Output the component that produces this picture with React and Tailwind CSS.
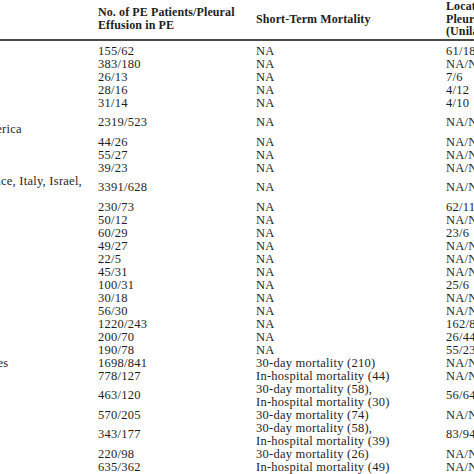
const rows = [
  { a: '', b: '155/62', c: 'NA', d: '61/18' },
  { a: '', b: '383/180', c: 'NA', d: 'NA/NA' },
  { a: '', b: '26/13', c: 'NA', d: '7/6' },
  { a: '', b: '28/16', c: 'NA', d: '4/12' },
  { a: '', b: '31/14', c: 'NA', d: '4/10' },
  { a: ['US,', 'America'], b: '2319/523', c: 'NA', d: 'NA/NA' },
  { a: '', b: '44/26', c: 'NA', d: 'NA/NA' },
  { a: '', b: '55/27', c: 'NA', d: 'NA/NA' },
  { a: '', b: '39/23', c: 'NA', d: 'NA/NA' },
  { a: ['France, Italy, Israel,', 'US'], b: '3391/628', c: 'NA', d: 'NA/NA' },
  { a: '', b: '230/73', c: 'NA', d: '62/11' },
  { a: '', b: '50/12', c: 'NA', d: 'NA/NA' },
  { a: '', b: '60/29', c: 'NA', d: '23/6' },
  { a: '', b: '49/27', c: 'NA', d: 'NA/NA' },
  { a: '', b: '22/5', c: 'NA', d: 'NA/NA' },
  { a: '', b: '45/31', c: 'NA', d: 'NA/NA' },
  { a: '', b: '100/31', c: 'NA', d: '25/6' },
  { a: '', b: '30/18', c: 'NA', d: 'NA/NA' },
  { a: '', b: '56/30', c: 'NA', d: 'NA/NA' },
  { a: '', b: '1220/243', c: 'NA', d: '162/81' },
  { a: '', b: '200/70', c: 'NA', d: '26/44' },
  { a: '', b: '190/78', c: 'NA', d: '55/23' },
  { a: 'States', b: '1698/841', c: '30-day mortality (210)', d: 'NA/NA' },
  { a: '', b: '778/127', c: 'In-hospital mortality (44)', d: 'NA/NA' },
  { a: '', b: '463/120', c: ['30-day mortality (58),', 'In-hospital mortality (30)'], d: '56/64' },
  { a: '', b: '570/205', c: '30-day mortality (74)', d: 'NA/NA' },
  { a: '', b: '343/177', c: ['30-day mortality (58),', 'In-hospital mortality (39)'], d: '83/94' },
  { a: '', b: '220/98', c: '30-day mortality (26)', d: 'NA/NA' },
  { a: '', b: '635/362', c: 'In-hospital mortality (49)', d: 'NA/NA' },
]

function Cell({ value }) {
  if (Array.isArray(value)) {
    return (
      <div className="whitespace-nowrap">
        {value.map((line, i) => (
          <div key={i}>{line}</div>
        ))}
      </div>
    )
  }
  return <div className="whitespace-nowrap">{value}</div>
}

export default function App() {
  return (
    <div
      className="w-[474px] h-[474px] overflow-hidden bg-white text-[#1e1e1e]"
      style={{ fontFamily: '"Liberation Serif", "Times New Roman", serif' }}
    >
      <div className="w-[620px] -ml-[23px]">
        <div className="grid grid-cols-[121px_158px_190px_151px] items-center h-[37px] text-[12px] font-bold leading-[12.5px] tracking-[0.1px]">
          <div />
          <div className="whitespace-nowrap">
            No. of PE Patients/Pleural
            <br />
            Effusion in PE
          </div>
          <div className="whitespace-nowrap">Short-Term Mortality</div>
          <div className="whitespace-nowrap">
            Location of
            <br />
            Pleural Effusion
            <br />
            (Unilateral/Bilateral)
          </div>
        </div>
        <div className="mt-[2px] h-[1.5px] bg-[#4a4a4a]" />
        <div className="pt-[4px] text-[12.5px] leading-[13px] tracking-[0.25px]">
          {rows.map((r, i) => (
            <div key={i} className="grid grid-cols-[121px_158px_190px_151px] items-center">
              <Cell value={r.a} />
              <Cell value={r.b} />
              <Cell value={r.c} />
              <Cell value={r.d} />
            </div>
          ))}
        </div>
      </div>
    </div>
  )
}
